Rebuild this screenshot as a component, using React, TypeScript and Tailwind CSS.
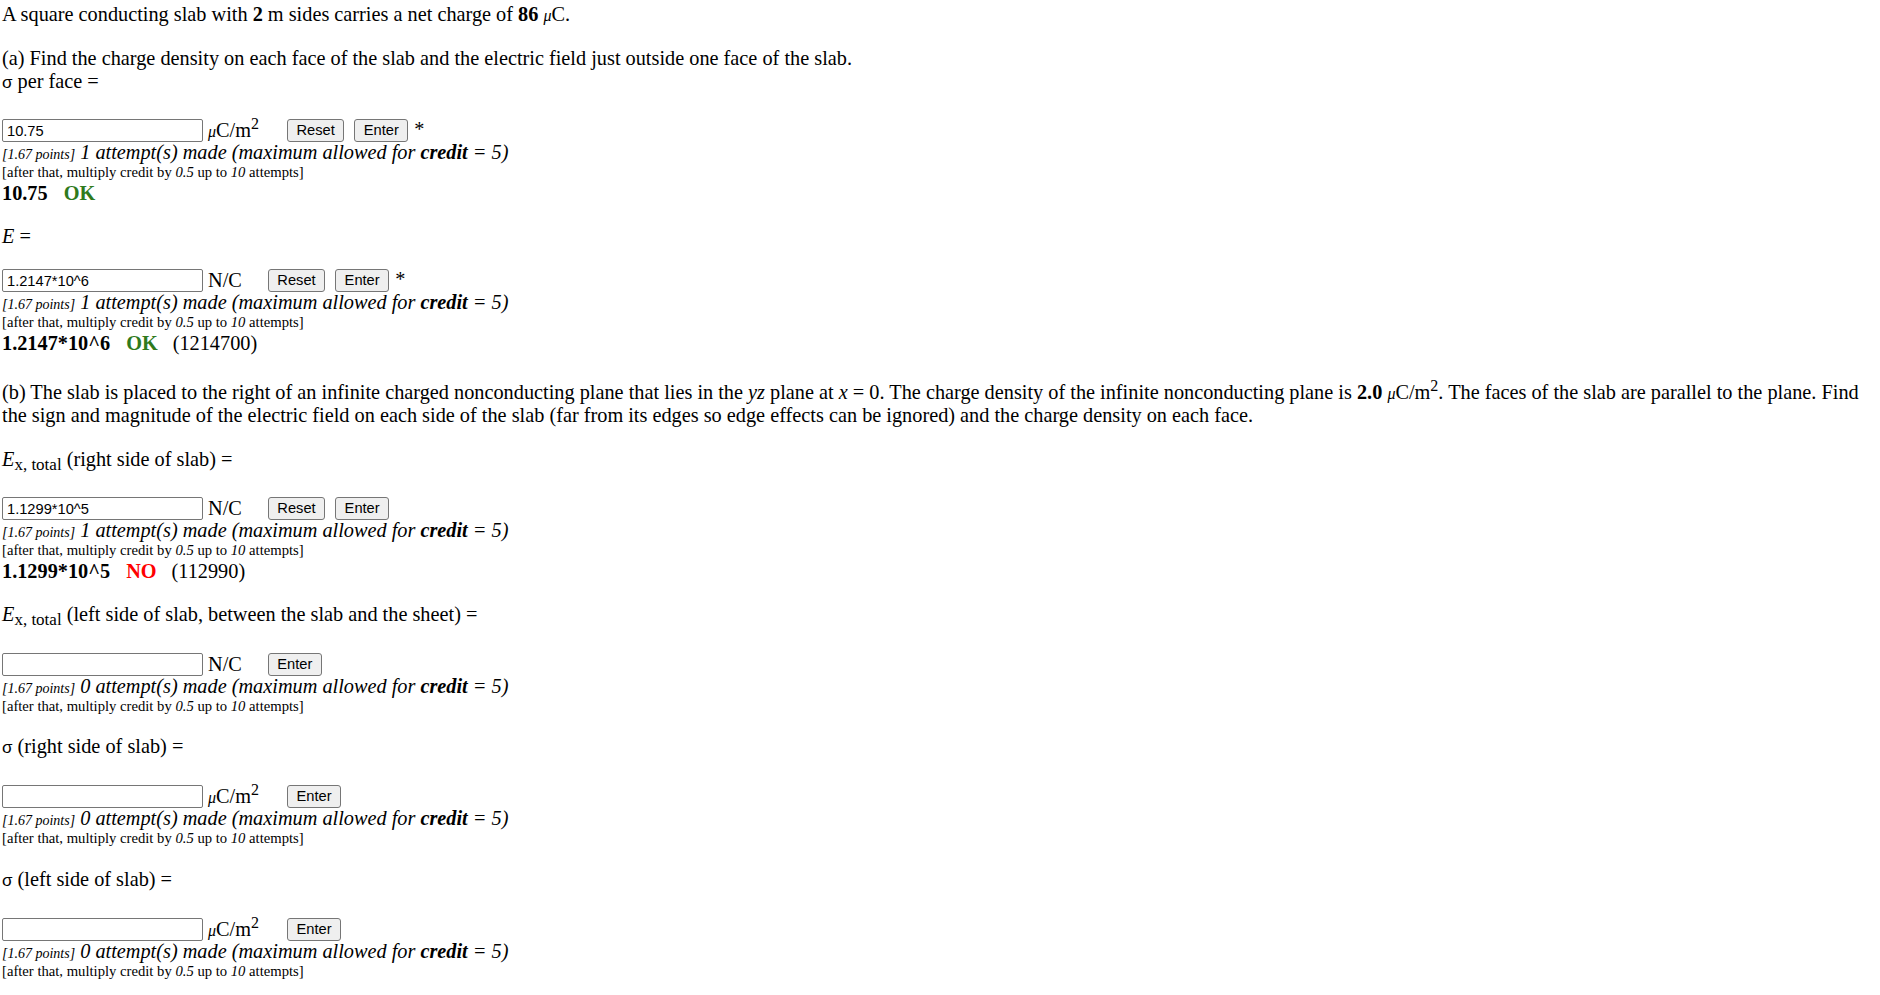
import type { ReactNode } from 'react';

const sans = "font-['Liberation_Sans',Arial,sans-serif]";

function Micro() {
  return <i className="text-[16px] leading-none">μ</i>;
}

function MicroCm2() {
  return (
    <span>
      <Micro />C/m<sup className="text-[16px] leading-none">2</sup>
    </span>
  );
}

function Sigma() {
  return <span className={`${sans} text-[17px] leading-none`}>σ</span>;
}

function Ex() {
  return (
    <span>
      <i>E</i>
      <sub className="text-[17px] leading-none">x, total</sub>
    </span>
  );
}

function Btn({ children, className = '' }: { children: ReactNode; className?: string }) {
  return (
    <button
      className={`${sans} h-[23px] px-[8.5px] text-[14.67px] leading-none bg-[#efefef] border border-[#767676] rounded-[3px] text-black ${className}`}
    >
      {children}
    </button>
  );
}

type PartProps = {
  label: ReactNode;
  labelMt: string;
  inputMt: string;
  value: string;
  unit: ReactNode;
  btnMl: string;
  reset?: boolean;
  star?: boolean;
  tries: number;
  answer?: ReactNode;
};

function Part({ label, labelMt, inputMt, value, unit, btnMl, reset, star, tries, answer }: PartProps) {
  return (
    <div>
      <div className={`leading-[23px] ${labelMt}`}>{label}</div>

      {/* answer box row */}
      <div className={`flex items-center h-[23px] ${inputMt}`}>
        <input
          readOnly
          value={value}
          className={`${sans} w-[201px] h-[23px] border border-[#767676] rounded-[2px] px-[4px] text-[14.67px] text-black outline-none`}
        />
        <span className="ml-[5px] leading-[23px]">{unit}</span>
        {reset && <Btn className={btnMl}>Reset</Btn>}
        <Btn className={reset ? 'ml-[10px]' : btnMl}>Enter</Btn>
        {star && <span className="ml-[6px] leading-[20px] self-start">*</span>}
      </div>

      <div className="leading-[21px] italic">
        <span className="text-[14px] leading-none">[1.67 points]</span> {tries} attempt(s) made (maximum allowed for{' '}
        <b>credit</b> = 5)
      </div>
      <div className="leading-[19px] text-[14.67px]">
        [after that, multiply credit by <i>0.5</i> up to <i>10</i> attempts]
      </div>
      {answer && <div className="leading-[23px]">{answer}</div>}
    </div>
  );
}

export default function App() {
  return (
    <div className="min-h-screen bg-white text-black font-['Liberation_Serif','Times_New_Roman',serif] text-[20.3px] pl-[2px] pr-[8px]">
      <div className="leading-[23px] pt-[3px]">
        A square conducting slab with <b>2</b> m sides carries a net charge of <b>86</b> <Micro />C.
      </div>

      <div className="leading-[24px] mt-[20px]">
        (a) Find the charge density on each face of the slab and the electric field just outside one face of the slab.
      </div>

      <Part
        label={
          <>
            <Sigma /> per face =
          </>
        }
        labelMt="mt-0"
        inputMt="mt-[26px]"
        value="10.75"
        unit={<MicroCm2 />}
        btnMl="ml-[28px]"
        reset
        star
        tries={1}
        answer={
          <>
            <b>10.75</b>
            <b className="ml-[16px] text-[#2f7a1c]">OK</b>
          </>
        }
      />

      <Part
        label={
          <>
            <i>E</i> =
          </>
        }
        labelMt="mt-[20px]"
        inputMt="mt-[21px]"
        value="1.2147*10^6"
        unit="N/C"
        btnMl="ml-[26px]"
        reset
        star
        tries={1}
        answer={
          <>
            <b>1.2147*10^6</b>
            <b className="ml-[16px] text-[#2f7a1c]">OK</b>
            <span className="ml-[15px]">(1214700)</span>
          </>
        }
      />

      <div className="leading-[23px] mt-[26px]">
        (b) The slab is placed to the right of an infinite charged nonconducting plane that lies in the <i>yz</i> plane
        at <i>x</i> = 0. The charge density of the infinite nonconducting plane is <b>2.0</b> <MicroCm2 />. The faces of
        the slab are parallel to the plane. Find the sign and magnitude of the electric field on each side of the slab
        (far from its edges so edge effects can be ignored) and the charge density on each face.
      </div>

      <Part
        label={
          <>
            <Ex /> (right side of slab) =
          </>
        }
        labelMt="mt-[21px]"
        inputMt="mt-[26px]"
        value="1.1299*10^5"
        unit="N/C"
        btnMl="ml-[26px]"
        reset
        tries={1}
        answer={
          <>
            <b>1.1299*10^5</b>
            <b className="ml-[16px] text-[#ff0000]">NO</b>
            <span className="ml-[15px]">(112990)</span>
          </>
        }
      />

      <Part
        label={
          <>
            <Ex /> (left side of slab, between the slab and the sheet) =
          </>
        }
        labelMt="mt-[20px]"
        inputMt="mt-[27px]"
        value=""
        unit="N/C"
        btnMl="ml-[26px]"
        tries={0}
      />

      <Part
        label={
          <>
            <Sigma /> (right side of slab) =
          </>
        }
        labelMt="mt-[19px]"
        inputMt="mt-[27px]"
        value=""
        unit={<MicroCm2 />}
        btnMl="ml-[28px]"
        tries={0}
      />

      <Part
        label={
          <>
            <Sigma /> (left side of slab) =
          </>
        }
        labelMt="mt-[20px]"
        inputMt="mt-[27px]"
        value=""
        unit={<MicroCm2 />}
        btnMl="ml-[28px]"
        tries={0}
      />
    </div>
  );
}
